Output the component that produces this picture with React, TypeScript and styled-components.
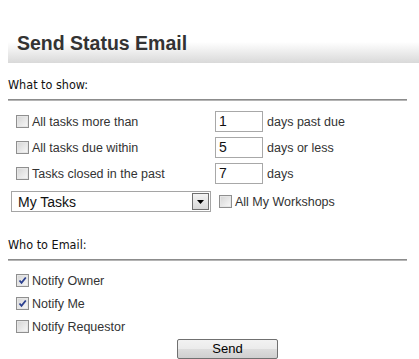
import React from "react";
import styled, { createGlobalStyle } from "styled-components";

const Global = createGlobalStyle`
  html, body { margin: 0; padding: 0; background: #fff; }
  body { font-family: "Liberation Sans", Arial, sans-serif; }
`;

const Page = styled.div`
  width: 419px;
  height: 359px;
  overflow: hidden;
  padding: 28px 0 0 8px;
  box-sizing: border-box;
`;

const Header = styled.div`
  height: 35px;
  display: flex;
  align-items: center;
  padding-left: 9px;
  background: linear-gradient(to bottom, #ffffff 0%, #ffffff 40%, #d9d9d9 100%);
`;

const Title = styled.h1`
  margin: 0;
  font-family: "Liberation Sans", Arial, sans-serif;
  font-weight: bold;
  font-size: 19.5px;
  color: #333333;
  line-height: 1;
  margin-top: -4px;
`;

const Section = styled.div<{ $top: number }>`
  margin-top: ${(p) => p.$top}px;
  margin-right: 12px;
`;

const SectionLabel = styled.div`
  font-family: "DejaVu Sans Condensed", "DejaVu Sans", sans-serif;
  font-size: 12.5px;
  color: #111;
  height: 16px;
  line-height: 16px;
`;

const Rule = styled.div`
  margin-top: 6px;
  height: 0;
  border-top: 1px solid #8c8c8c;
  border-bottom: 1px solid #b4b4b4;
`;

const Grid = styled.div`
  display: grid;
  grid-template-columns: 204px auto;
  row-gap: 5px;
  padding-left: 3px;
  margin-top: 10px;
`;

const CheckRow = styled.label<{ $indent?: number }>`
  display: flex;
  align-items: center;
  height: 21px;
  gap: 3px;
  padding-left: ${(p) => p.$indent ?? 0}px;
  font-family: "Liberation Sans", Arial, sans-serif;
  font-size: 12.5px;
  color: #333;
`;

const Box = styled.span`
  width: 11px;
  height: 11px;
  border: 1px solid #8f8f8f;
  background: linear-gradient(135deg, #d4d4d4 0%, #eeeeee 70%, #f8f8f8 100%);
  display: inline-flex;
  align-items: center;
  justify-content: center;
  flex: none;
  box-shadow: inset 0 0 0 1px #e6e6e6;
`;

const InputRow = styled.div`
  display: flex;
  align-items: center;
  gap: 4px;
  font-family: "Liberation Sans", Arial, sans-serif;
  font-size: 12.5px;
  color: #333;
`;

const TextInput = styled.div`
  width: 43px;
  height: 19px;
  border: 1px solid #a8a8a8;
  padding-left: 3px;
  font-size: 14px;
  line-height: 19px;
  color: #111;
`;

const SelectRow = styled.div`
  display: flex;
  align-items: center;
  gap: 8px;
  margin-top: 7px;
  margin-left: 3px;
`;

const Select = styled.div`
  width: 191px;
  height: 19px;
  border: 1px solid #a5a5a5;
  display: flex;
  align-items: center;
  justify-content: space-between;
  padding: 0 1px 0 6px;
  box-sizing: content-box;
  font-size: 14px;
  color: #111;
`;

const ArrowBtn = styled.span`
  width: 15px;
  height: 15px;
  border: 1px solid #6f6f6f;
  background: linear-gradient(to bottom, #f4f4f4, #d8d8d8);
  display: inline-flex;
  align-items: center;
  justify-content: center;
`;

const NotifyList = styled.div`
  display: flex;
  flex-direction: column;
  gap: 2px;
  margin-top: 9px;
  padding-left: 8px;
`;

const ButtonRow = styled.div`
  display: flex;
  padding-left: 169px;
  margin-top: 2px;
`;

const Button = styled.button`
  width: 101px;
  height: 20px;
  border: 1px solid #707070;
  border-radius: 2px;
  background: linear-gradient(to bottom, #f2f2f2 0%, #ebebeb 50%, #dddddd 51%, #cfcfcf 100%);
  font-family: "Liberation Sans", Arial, sans-serif;
  font-size: 13px;
  color: #000;
  padding: 0;
  line-height: 18px;
`;

const Check = ({ checked }: { checked?: boolean }) => (
  <Box>
    {checked && (
      <svg width="9" height="9" viewBox="0 0 9 9">
        <path d="M1.5 4.5 L3.5 6.8 L7.8 1.5" fill="none" stroke="#2a3f8f" strokeWidth="1.8" />
      </svg>
    )}
  </Box>
);

export default function App() {
  return (
    <Page>
      <Global />
      <Header>
        <Title>Send Status Email</Title>
      </Header>
      <Section $top={14}>
        <SectionLabel>What to show:</SectionLabel>
        <Rule />
        <Grid>
          <CheckRow $indent={5}>
            <Check />All tasks more than
          </CheckRow>
          <InputRow>
            <TextInput>1</TextInput>days past due
          </InputRow>
          <CheckRow $indent={5}>
            <Check />All tasks due within
          </CheckRow>
          <InputRow>
            <TextInput>5</TextInput>days or less
          </InputRow>
          <CheckRow $indent={5}>
            <Check />Tasks closed in the past
          </CheckRow>
          <InputRow>
            <TextInput>7</TextInput>days
          </InputRow>
        </Grid>
        <SelectRow>
          <Select>
            <span>My Tasks</span>
            <ArrowBtn>
              <svg width="7" height="4" viewBox="0 0 7 4">
                <path d="M0 0 H7 L3.5 4 Z" fill="#000" />
              </svg>
            </ArrowBtn>
          </Select>
          <CheckRow>
            <Check />All My Workshops
          </CheckRow>
        </SelectRow>
      </Section>
      <Section $top={25}>
        <SectionLabel>Who to Email:</SectionLabel>
        <Rule />
        <NotifyList>
          <CheckRow><Check checked />Notify Owner</CheckRow>
          <CheckRow><Check checked />Notify Me</CheckRow>
          <CheckRow><Check />Notify Requestor</CheckRow>
        </NotifyList>
      </Section>
      <ButtonRow>
        <Button>Send</Button>
      </ButtonRow>
    </Page>
  );
}
